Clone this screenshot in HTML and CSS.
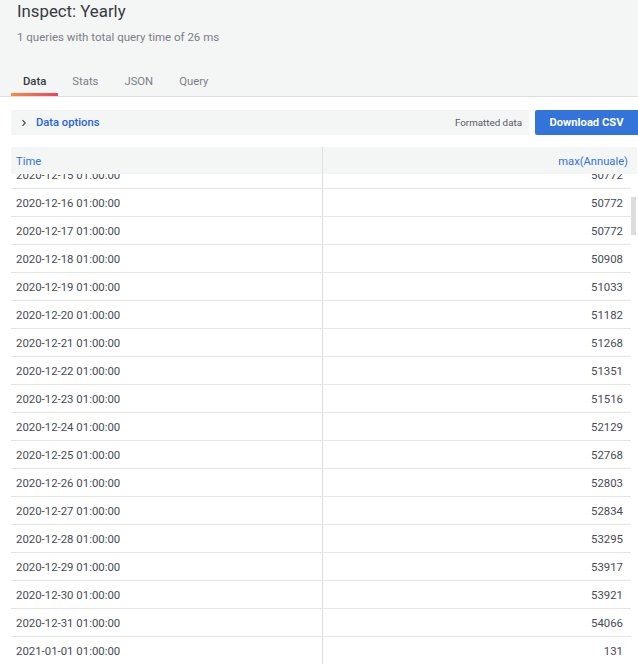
FILE: index.html
```html
<!DOCTYPE html>
<html>
<head>
<meta charset="utf-8">
<link rel="stylesheet" href="styles.css">
</head>
<body>
<div class="drawer-header">
  <h1 class="title">Inspect: Yearly</h1>
  <div class="subtitle">1 queries with total query time of 26 ms</div>
  <div class="tabs">
    <div class="tab active">Data</div>
    <div class="tab">Stats</div>
    <div class="tab">JSON</div>
    <div class="tab">Query</div>
  </div>
</div>
<div class="content">
  <div class="toolbar">
    <div class="options">
      <svg class="chev" width="6" height="8" viewBox="0 0 6 8"><path d="M1.5 1.2 L4.2 4 L1.5 6.8" fill="none" stroke="#464c54" stroke-width="1.2"/></svg>
      <span class="options-label">Data options</span>
      <span class="formatted">Formatted data</span>
    </div>
    <button class="btn">Download CSV</button>
  </div>
  <div class="table">
    <div class="thead">
      <div class="th th-time">Time</div>
      <div class="th th-val">max(Annuale)</div>
    </div>
    <div class="tbody">
      <div class="rows">
        <div class="row first"><div class="td td-time">2020-12-15 01:00:00</div><div class="td td-val">50772</div></div>
        <div class="row"><div class="td td-time">2020-12-16 01:00:00</div><div class="td td-val">50772</div></div>
        <div class="row"><div class="td td-time">2020-12-17 01:00:00</div><div class="td td-val">50772</div></div>
        <div class="row"><div class="td td-time">2020-12-18 01:00:00</div><div class="td td-val">50908</div></div>
        <div class="row"><div class="td td-time">2020-12-19 01:00:00</div><div class="td td-val">51033</div></div>
        <div class="row"><div class="td td-time">2020-12-20 01:00:00</div><div class="td td-val">51182</div></div>
        <div class="row"><div class="td td-time">2020-12-21 01:00:00</div><div class="td td-val">51268</div></div>
        <div class="row"><div class="td td-time">2020-12-22 01:00:00</div><div class="td td-val">51351</div></div>
        <div class="row"><div class="td td-time">2020-12-23 01:00:00</div><div class="td td-val">51516</div></div>
        <div class="row"><div class="td td-time">2020-12-24 01:00:00</div><div class="td td-val">52129</div></div>
        <div class="row"><div class="td td-time">2020-12-25 01:00:00</div><div class="td td-val">52768</div></div>
        <div class="row"><div class="td td-time">2020-12-26 01:00:00</div><div class="td td-val">52803</div></div>
        <div class="row"><div class="td td-time">2020-12-27 01:00:00</div><div class="td td-val">52834</div></div>
        <div class="row"><div class="td td-time">2020-12-28 01:00:00</div><div class="td td-val">53295</div></div>
        <div class="row"><div class="td td-time">2020-12-29 01:00:00</div><div class="td td-val">53917</div></div>
        <div class="row"><div class="td td-time">2020-12-30 01:00:00</div><div class="td td-val">53921</div></div>
        <div class="row"><div class="td td-time">2020-12-31 01:00:00</div><div class="td td-val">54066</div></div>
        <div class="row"><div class="td td-time">2021-01-01 01:00:00</div><div class="td td-val">131</div></div>
      </div>
      <div class="scrollbar"><div class="thumb"></div></div>
    </div>
  </div>
</div>
</body>
</html>
```
FILE: styles.css
```css
* { box-sizing: border-box; }
html, body { margin: 0; padding: 0; background: #fff; }
body {
  font-family: Roboto, "Liberation Sans", sans-serif;
  color: #464c54;
  width: 638px;
  height: 671px;
  overflow: hidden;
}
.drawer-header {
  background: #f4f5f5;
  border-bottom: 1px solid #dcdee0;
  height: 97px;
  padding: 0 0 0 11px;
  display: flex;
  flex-direction: column;
}
.title {
  margin: 0 0 0 6px;
  font-size: 16.8px;
  line-height: 22px;
  font-weight: 400;
  color: #343b40;
}
.subtitle {
  margin: 7px 0 0 6px;
  font-size: 11.5px;
  line-height: 16px;
  color: #7b8087;
}
.tabs {
  margin-top: auto;
  display: flex;
}
.tab {
  padding: 0 12px;
  height: 21px;
  font-size: 11.3px;
  line-height: 14px;
  color: #7b8087;
  margin-right: 2px;
}
.tab.active {
  color: #343b40;
  font-weight: 500;
  border-bottom: 3px solid transparent;
  border-image: linear-gradient(90deg, #fb8c3c, #f43f5e) 1;
}
.content {
  padding: 13px 1px 0 11px;
}
.toolbar {
  display: flex;
  height: 25px;
  gap: 6px;
}
.options {
  flex: 1;
  background: #f4f5f5;
  display: flex;
  align-items: center;
  padding: 0 7px 0 10px;
}
.chev { margin-right: 9px; }
.options-label {
  color: #1f62e0;
  font-size: 11.2px;
  font-weight: 500;
}
.formatted {
  margin-left: auto;
  font-size: 9.8px;
  color: #555b63;
}
.btn {
  width: 103px;
  height: 25px;
  border: 0;
  border-radius: 2px 0 0 2px;
  background: #3274d9;
  color: #fff;
  font-family: Roboto, "Liberation Sans", sans-serif;
  font-size: 11.2px;
  font-weight: 700;
  padding: 0;
  margin-right: -1px;
}
.table {
  margin-top: 12px;
  width: 626px;
}
.thead {
  display: flex;
  background: #f4f5f5;
  height: 27px;
}
.th {
  font-size: 11.2px;
  color: #3274d9;
  line-height: 27px;
  padding-top: 1px;
}
.th-time {
  width: 312px;
  border-right: 1px solid #dcdee0;
  padding-left: 5px;
}
.th-val {
  flex: 1;
  text-align: right;
  padding-right: 9px;
}
.tbody {
  display: flex;
  height: 490px;
  overflow: hidden;
}
.rows {
  width: 620px;
}
.row {
  display: flex;
  height: 28px;
  border-top: 1px solid #e4e5e6;
}
.row.first { margin-top: -14px; }
.td {
  font-size: 11.4px;
  line-height: 27px;
  color: #464c54;
  padding-top: 1px;
}
.td-time {
  width: 312px;
  border-right: 1px solid #dcdee0;
  padding-left: 5px;
}
.td-val {
  flex: 1;
  text-align: right;
  padding-right: 8px;
}
.scrollbar {
  width: 6px;
}
.thumb {
  margin-top: 23px;
  width: 5px;
  height: 38px;
  background: #dcdcdc;
}
```
